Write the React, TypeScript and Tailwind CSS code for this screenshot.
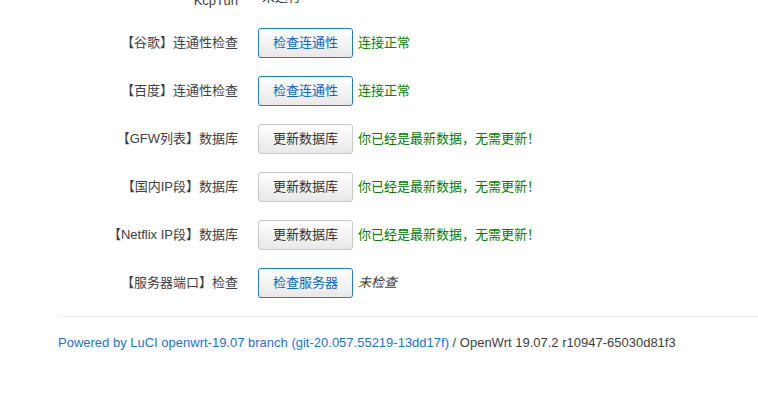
import React from "react";

type Row = {
  label: string;
  button: string;
  kind: "check" | "update";
  status: string;
  statusKind: "ok" | "muted";
};

const rows: Row[] = [
  { label: "【谷歌】连通性检查", button: "检查连通性", kind: "check", status: "连接正常", statusKind: "ok" },
  { label: "【百度】连通性检查", button: "检查连通性", kind: "check", status: "连接正常", statusKind: "ok" },
  { label: "【GFW列表】数据库", button: "更新数据库", kind: "update", status: "你已经是最新数据，无需更新！", statusKind: "ok" },
  { label: "【国内IP段】数据库", button: "更新数据库", kind: "update", status: "你已经是最新数据，无需更新！", statusKind: "ok" },
  { label: "【Netflix IP段】数据库", button: "更新数据库", kind: "update", status: "你已经是最新数据，无需更新！", statusKind: "ok" },
  { label: "【服务器端口】检查", button: "检查服务器", kind: "check", status: "未检查", statusKind: "muted" },
];

function ActionButton({ text, kind }: { text: string; kind: "check" | "update" }) {
  return (
    <button
      className={
        kind === "check"
          ? "h-[30px] w-[95px] rounded-[3px] border border-[#1b7be0] bg-gradient-to-b from-white to-[#e8e8e8] text-[13px] text-[#0a66cc]"
          : "h-[30px] w-[95px] rounded-[3px] border border-[#c8c8c8] bg-gradient-to-b from-white to-[#e8e8e8] text-[13px] text-[#333]"
      }
    >
      {text}
    </button>
  );
}

export default function App() {
  return (
    <div
      className="h-[410px] w-[758px] overflow-hidden bg-white text-[13px] text-[#404040]"
      style={{ fontFamily: '"Liberation Sans", "Noto Sans CJK SC", sans-serif' }}
    >
      <div className="-mt-[25px]">
        {/* partly hidden row above */}
        <div className="grid h-[44px] grid-cols-[238px_1fr] items-start gap-x-[20px] pt-[16px]">
          <div className="text-right">KcpTun</div>
          <div className="-mt-[4px] pl-[4px] text-[#333]">未运行</div>
        </div>

        {rows.map((row, i) => (
          <div key={i} className="grid h-[48px] grid-cols-[238px_1fr] items-center gap-x-[20px]">
            <div className="text-right">{row.label}</div>
            <div className="flex items-center gap-[5px]">
              <ActionButton text={row.button} kind={row.kind} />
              <span className={row.statusKind === "ok" ? "text-[#008000]" : "italic text-[#404040]"}>
                {row.status}
              </span>
            </div>
          </div>
        ))}
      </div>

      <div className="ml-[58px] mt-[9px] border-t border-[#eeeeee] pt-[16px] text-[13px]">
        <span className="text-[#1a73d9]">Powered by LuCI openwrt-19.07 branch (git-20.057.55219-13dd17f)</span>
        <span className="text-[#404040]"> / OpenWrt 19.07.2 r10947-65030d81f3</span>
      </div>
    </div>
  );
}
